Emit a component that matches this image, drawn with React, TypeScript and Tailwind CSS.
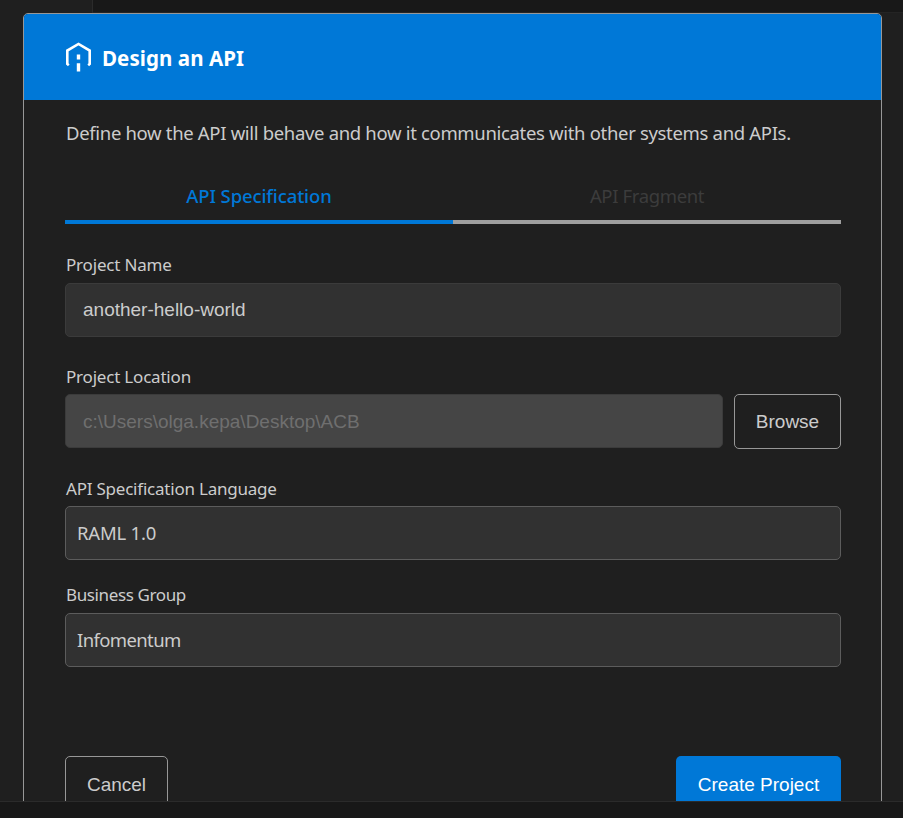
import type { ReactNode } from "react";

const sans = "font-['Noto_Sans','Open_Sans',sans-serif]";
const arial = "font-['Liberation_Sans',Arial,sans-serif]";

function Label({ className, children }: { className: string; children: ReactNode }) {
  return (
    <div className={`flex h-[26px] items-center whitespace-nowrap pl-px text-[17px] text-[#cccccc] ${className}`}>
      <span>{children}</span>
    </div>
  );
}

export default function App() {
  return (
    <div className={`flex h-[818px] w-[903px] flex-col overflow-hidden bg-[#1f1f1f] ${sans}`}>
      <div className="flex h-[13px] shrink-0">
        <div className="w-[93px] border-r border-[#2b2b2b] bg-[#1f1f1f]" />
        <div className="flex-1 border-b border-[#242424] bg-[#181818]" />
      </div>
      <main className="h-[788px] shrink-0 overflow-hidden pl-[23px]">
        <section className="h-[860px] w-[859px] overflow-hidden rounded-[5px] border border-[#979797] bg-[#1f1f1f]">
          <header className="flex h-[86px] items-center bg-[#0078d7] pl-[41px]">
            <svg className="mt-px h-[31px] w-[27px]" viewBox="0 0 27 31" fill="none" stroke="#fff" strokeWidth="2.6">
              <path d="M3.8 23.2 L2.3 22 V8.6 L13.5 2 L24.7 8.6 V22 L23.2 23.2" />
              <path d="M13.5 12.6v4.8M13.5 21.2v8.4" strokeWidth="3.4" />
            </svg>
            <h1 className="ml-[10px] mt-[3px] whitespace-nowrap text-[20.5px] font-bold tracking-[0.08px] text-white">Design an API</h1>
          </header>
          <div className="pl-[41px] pr-[40px]">
            <p className="mt-[19px] h-[28px] whitespace-nowrap pl-px text-[18.5px] leading-[28px] tracking-[-0.325px] text-[#cccccc]">
              Define how the API will behave and how it communicates with other systems and APIs.
            </p>
            <nav className="mt-[33px] flex h-[44px] text-[18.5px] leading-[31px]">
              <div className="flex-1 border-b-[4px] border-[#0078d7] text-center font-medium tracking-[-0.12px] text-[#0078d7]">API Specification</div>
              <div className="flex-1 border-b-[4px] border-[#9f9f9f] text-center tracking-[-0.36px] text-[#3c3c3c]">API Fragment</div>
            </nav>
            <Label className="mt-[28px] tracking-[-0.18px]">Project Name</Label>
            <div className={`mt-[5px] flex h-[54px] items-center rounded-[5px] border border-[#3b3b3b] bg-[#313131] pl-[17px] text-[19px] text-[#cccccc] ${arial}`}>
              <span>another-hello-world</span>
            </div>
            <Label className="mt-[27px] tracking-[-0.2px]">Project Location</Label>
            <div className={`mt-[4px] flex h-[55px] justify-between text-[19px] ${arial}`}>
              <div className="flex h-[54px] w-[658px] items-center rounded-[5px] border border-[#3b3b3b] bg-[#454545] pl-[17px] pt-[2px] text-[#6f6f6f]">
                <span>c:\Users\olga.kepa\Desktop\ACB</span>
              </div>
              <button className="h-[55px] w-[107px] rounded-[5px] border border-[#979797] pt-px text-[#cccccc]">Browse</button>
            </div>
            <Label className="mt-[27px] tracking-[-0.22px]">API Specification Language</Label>
            <div className="mt-[4px] flex h-[54px] items-center rounded-[5px] border border-[#5c5c5c] bg-[#313131] pl-[11px] text-[18.5px] tracking-[-0.2px] text-[#cccccc]">
              <span>RAML 1.0</span>
            </div>
            <Label className="mt-[22px] tracking-[-0.38px]">Business Group</Label>
            <div className="mt-[5px] flex h-[54px] items-center rounded-[5px] border border-[#5c5c5c] bg-[#313131] pl-[11px] text-[18.5px] tracking-[-0.62px] text-[#cccccc]">
              <span>Infomentum</span>
            </div>
            <div className={`mt-[89px] flex justify-between text-[19px] ${arial}`}>
              <button className="h-[56px] w-[103px] rounded-[5px] border border-[#979797] pt-[2px] text-[#cccccc]">Cancel</button>
              <button className="h-[56px] w-[165px] rounded-[5px] bg-[#0078d7] pt-[2px] text-white">Create Project</button>
            </div>
          </div>
        </section>
      </main>
      <footer className="h-[17px] shrink-0 border-t border-[#2b2b2b] bg-[#181818]" />
    </div>
  );
}
